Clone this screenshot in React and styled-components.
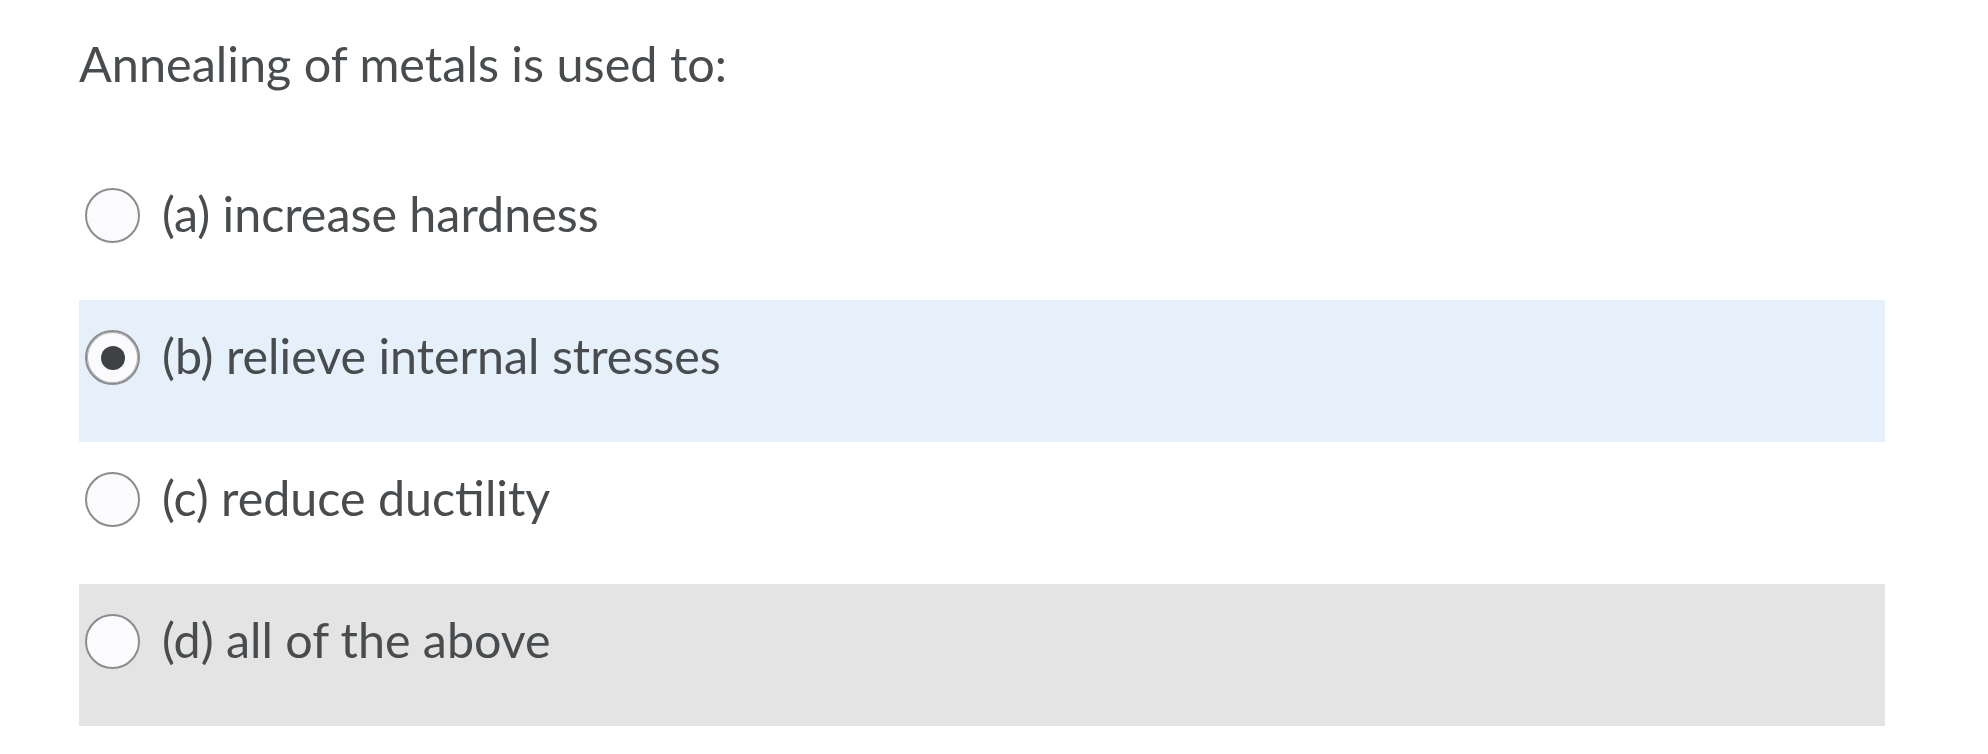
import React, { useState } from "react";
import styled, { createGlobalStyle } from "styled-components";

const GlobalStyle = createGlobalStyle`
  body {
    margin: 0;
    background: #fff;
    font-family: Lato, "Open Sans", sans-serif;
    color: #494c4e;
  }
`;

const Page = styled.div`
  padding: 34px 103px 0 79px;
`;

const Question = styled.div`
  font-size: 48.6px;
  line-height: 58px;
  height: 58px;
  margin-bottom: 66px;
`;

const Options = styled.div`
  display: flex;
  flex-direction: column;
`;

const Option = styled.label`
  display: flex;
  align-items: flex-start;
  gap: 22px;
  height: 142px;
  box-sizing: border-box;
  padding: 29px 0 0 6px;
  font-size: 48.4px;
  line-height: 52px;
  cursor: pointer;
  background: ${p =>
    p.selected ? "#e5f0fb" : p.hovered ? "#e4e4e4" : "transparent"};
`;

const Radio = styled.span`
  flex: none;
  width: 55px;
  height: 55px;
  margin-top: 1px;
  box-sizing: border-box;
  border-radius: 50%;
  border: 2px solid #8c8c8e;
  background: #fbfbfd;
  display: flex;
  align-items: center;
  justify-content: center;
  box-shadow: ${p => (p.checked ? "inset 0 0 0 1px #b0b0b2" : "none")};

  &::after {
    content: "";
    width: 24px;
    height: 24px;
    border-radius: 50%;
    background: #3f4244;
    display: ${p => (p.checked ? "block" : "none")};
  }
`;

const answers = [
  { id: "a", text: "(a) increase hardness" },
  { id: "b", text: "(b) relieve internal stresses" },
  { id: "c", text: "(c) reduce ductility" },
  { id: "d", text: "(d) all of the above" }
];

export default function App() {
  const [selected, setSelected] = useState("b");
  const [hovered, setHovered] = useState("d");

  return (
    <Page>
      <GlobalStyle />
      <Question>Annealing of metals is used to:</Question>
      <Options>
        {answers.map(a => (
          <Option
            key={a.id}
            selected={selected === a.id}
            hovered={hovered === a.id}
            onClick={() => setSelected(a.id)}
            onMouseEnter={() => setHovered(a.id)}
          >
            <Radio checked={selected === a.id} />
            <span>{a.text}</span>
          </Option>
        ))}
      </Options>
    </Page>
  );
}
